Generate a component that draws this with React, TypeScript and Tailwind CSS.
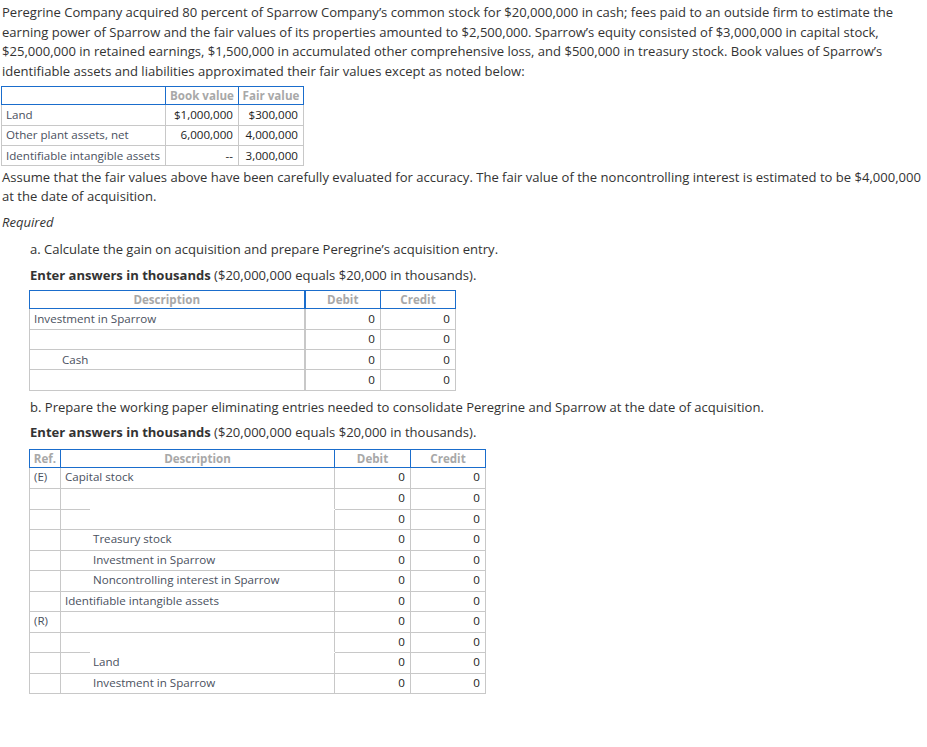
import React from "react";

const H = "border border-[#1a6dcc] text-center font-bold text-[#a8a8a8] p-0 h-[18px] leading-[15px]";
const C = "border border-[#c8c8c8] p-0 text-[#4a5160]";
const N = "border border-[#c8c8c8] p-0 text-right pr-[5px] text-[#222]";

const t2 = [["Investment in Sparrow", 0], ["", 0], ["Cash", 1], ["", 0]] as const;

const t3: { ref: string; d: string; ind: number; gap?: boolean }[] = [
  { ref: "(E)", d: "Capital stock", ind: 0 },
  { ref: "", d: "", ind: 0, gap: true },
  { ref: "", d: "", ind: 0 },
  { ref: "", d: "Treasury stock", ind: 1 },
  { ref: "", d: "Investment in Sparrow", ind: 1 },
  { ref: "", d: "Noncontrolling interest in Sparrow", ind: 1 },
  { ref: "", d: "Identifiable intangible assets", ind: 0 },
  { ref: "(R)", d: "", ind: 0 },
  { ref: "", d: "", ind: 0, gap: true },
  { ref: "", d: "Land", ind: 1 },
  { ref: "", d: "Investment in Sparrow", ind: 1 },
];

export default function App() {
  return (
    <div className="w-[927px] h-[747px] bg-white overflow-hidden pl-[2px] pt-[3px] text-[13.05px] leading-[19.6px] text-[#333] font-['Open_Sans',sans-serif]">
      <p className="w-[915px]">
        Peregrine Company acquired 80 percent of Sparrow Company’s common stock for $20,000,000 in cash; fees paid to an outside firm to estimate the earning power of Sparrow and the fair values of its properties amounted to $2,500,000. Sparrow’s equity consisted of $3,000,000 in capital stock, $25,000,000 in retained earnings, $1,500,000 in accumulated other comprehensive loss, and $500,000 in treasury stock. Book values of Sparrow’s identifiable assets and liabilities approximated their fair values except as noted below:
      </p>

      <table className="mt-[5px] -ml-[1px] border-collapse table-fixed w-[302px] text-[11.6px] leading-[16px]">
        <colgroup>
          <col className="w-[164px]" />
          <col className="w-[73px]" />
          <col className="w-[65px]" />
        </colgroup>
        <thead>
          <tr>
            <th className={`${H} pb-[1px]`}></th>
            <th className={`${H} pb-[1px]`}>Book value</th>
            <th className={`${H} pb-[1px]`}>Fair value</th>
          </tr>
        </thead>
        <tbody>
          {[
            ["Land", "$1,000,000", "$300,000"],
            ["Other plant assets, net", "6,000,000", "4,000,000"],
            ["Identifiable intangible assets", "--", "3,000,000"],
          ].map((r) => (
            <tr key={r[0]} className="h-[20.3px]">
              <td className={`${C} pl-[4px]`}>{r[0]}</td>
              <td className={`${N} pr-[4px] text-[#4a5160]`}>{r[1]}</td>
              <td className={`${N} pr-[4px] text-[#4a5160]`}>{r[2]}</td>
            </tr>
          ))}
        </tbody>
      </table>

      <p className="mt-[1.6px] w-[922px]">
        Assume that the fair values above have been carefully evaluated for accuracy. The fair value of the noncontrolling interest is estimated to be $4,000,000 at the date of acquisition.
      </p>
      <p className="mt-[6.4px] italic">Required</p>

      <div className="pl-[28px]">
        <p className="mt-[7px]">a. Calculate the gain on acquisition and prepare Peregrine’s acquisition entry.</p>
        <p className="mt-[6px]">
          <strong className="font-bold">Enter answers in thousands</strong> ($20,000,000 equals $20,000 in thousands).
        </p>

        <table className="mt-[5px] -ml-[1px] border-collapse table-fixed w-[426px] text-[11.6px] leading-[16px]">
          <colgroup>
            <col className="w-[275px]" />
            <col className="w-[76px]" />
            <col className="w-[75px]" />
          </colgroup>
          <thead>
            <tr>
              <th className={`${H} border-r-2`}>Description</th>
              <th className={H}>Debit</th>
              <th className={H}>Credit</th>
            </tr>
          </thead>
          <tbody>
            {t2.map((r, i) => (
              <tr key={i} className="h-[20.4px]">
                <td className={`${C} border-r-2 ${r[1] ? "pl-[32px]" : "pl-[4px]"}`}>{r[0]}</td>
                <td className={N}>0</td>
                <td className={N}>0</td>
              </tr>
            ))}
          </tbody>
        </table>

        <p className="mt-[7px]">b. Prepare the working paper eliminating entries needed to consolidate Peregrine and Sparrow at the date of acquisition.</p>
        <p className="mt-[6px]">
          <strong className="font-bold">Enter answers in thousands</strong> ($20,000,000 equals $20,000 in thousands).
        </p>

        <table className="mt-[6.5px] -ml-[1px] border-collapse table-fixed w-[456px] text-[11.6px] leading-[16px]">
          <colgroup>
            <col className="w-[31px]" />
            <col className="w-[274px]" />
            <col className="w-[76px]" />
            <col className="w-[75px]" />
          </colgroup>
          <thead>
            <tr>
              <th className={`${H} h-[16px] leading-[14px]`}>Ref.</th>
              <th className={`${H} h-[16px] leading-[14px]`}>Description</th>
              <th className={`${H} h-[16px] leading-[14px]`}>Debit</th>
              <th className={`${H} h-[16px] leading-[14px]`}>Credit</th>
            </tr>
          </thead>
          <tbody>
            {t3.map((r, i) => (
              <tr key={i} className="h-[20.55px]">
                <td className={`${C} pl-[4px] pb-[1.5px]`}>{r.ref}</td>
                <td
                  className={`${C} relative pb-[1.5px] ${r.gap ? "border-b-white" : ""} ${r.ind ? "pl-[32px]" : "pl-[4px]"}`}
                >
                  {r.d}
                  {r.gap && <span className="absolute left-0 -bottom-[1px] w-[29px] h-[1px] bg-[#c8c8c8]" />}
                </td>
                <td className={`${N} pb-[1.5px]`}>0</td>
                <td className={`${N} pb-[1.5px]`}>0</td>
              </tr>
            ))}
          </tbody>
        </table>
      </div>
    </div>
  );
}
